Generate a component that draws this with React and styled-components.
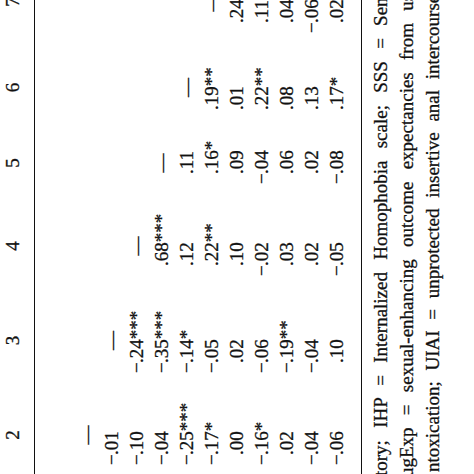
import React from 'react';
import styled, { createGlobalStyle } from 'styled-components';

const GlobalStyle = createGlobalStyle`
  html, body {
    margin: 0;
    padding: 0;
    background: #fff;
  }
`;

// columns 2..7 of the correlation matrix; true = column holds negative values
const columns = [
  { label: '2', neg: true },
  { label: '3', neg: true },
  { label: '4', neg: true },
  { label: '5', neg: true },
  { label: '6', neg: false },
  { label: '7', neg: true },
];

const rows = [
  [],
  ['—'],
  ['−.01', '—'],
  ['−.10', '−.24***', '—'],
  ['−.04', '−.35***', '.68***', '—'],
  ['−.25***', '−.14*', '.12', '.11', '—'],
  ['−.17*', '−.05', '.22**', '.16*', '.19**', '—'],
  ['.00', '.02', '.10', '.09', '.01', '.24**'],
  ['−.16*', '−.06', '−.02', '−.04', '.22**', '.11'],
  ['.02', '−.19**', '.03', '.06', '.08', '.04'],
  ['−.04', '−.04', '.02', '.02', '.13', '−.06'],
  ['−.06', '.10', '−.05', '−.08', '.17*', '.02'],
];

const notes = [
  { text: 'tory; IHP = Internalized Homophobia scale; SSS = Sensation Seeking Scale;', shift: -2, spacing: 7.5 },
  { text: 'ugExp = sexual-enhancing outcome expectancies from use of drugs during sex;', shift: -3, spacing: 7.5 },
  { text: 'ntoxication; UIAI = unprotected insertive anal intercourse with casual partners', shift: 2, spacing: 6 },
];

const Stage = styled.div`
  width: 474px;
  height: 474px;
  overflow: hidden;
  background: #fff;
`;

// the scanned page lies on its side
const Page = styled.div`
  width: 474px;
  height: 474px;
  overflow: hidden;
  transform: rotate(-90deg);
  transform-origin: center;
  font-family: 'Liberation Serif', 'Times New Roman', serif;
  font-size: 19px;
  color: #111;
  -webkit-text-stroke: 0.3px #111;
`;

const Row = styled.div`
  display: grid;
  grid-template-columns: 60px 65px 60px 42px 45px 62px;
  column-gap: 32px;
  height: 25px;
  line-height: 25px;
  padding-left: 9px;
  white-space: nowrap;
`;

const Cell = styled.div`
  text-align: ${(p) => (p.$center ? 'center' : 'left')};
`;

const Sign = styled.span`
  display: inline-block;
  width: ${(p) => (p.$slot ? '10px' : '0')};
`;

const Rule = styled.div`
  margin-top: ${(p) => p.$top}px;
  border-top: 1.5px solid #111;
`;

const Body = styled.div`
  margin-top: 14px;
`;

const Notes = styled.div`
  margin-top: 6px;
`;

const NoteLine = styled.div`
  height: 26px;
  line-height: 26px;
  white-space: nowrap;
  margin-left: ${(p) => p.$shift}px;
  word-spacing: ${(p) => p.$spacing}px;
`;

const Value = ({ value, slot }) => {
  if (!value) return <Cell />;
  if (value === '—') return <Cell $center>—</Cell>;
  const neg = value.startsWith('−');
  return (
    <Cell>
      <Sign $slot={slot}>{neg ? '−' : ''}</Sign>
      {neg ? value.slice(1) : value}
    </Cell>
  );
};

const App = () => (
  <Stage>
    <GlobalStyle />
    <Page>
      <Row>
        {columns.map((c) => (
          <Cell key={c.label} $center>
            {c.label}
          </Cell>
        ))}
      </Row>
      <Rule $top={9} />
      <Body>
        {rows.map((r, i) => (
          <Row key={i}>
            {columns.map((c, j) => (
              <Value key={c.label} value={r[j]} slot={c.neg} />
            ))}
          </Row>
        ))}
      </Body>
      <Rule $top={12} />
      <Notes>
        {notes.map((n) => (
          <NoteLine key={n.text} $shift={n.shift} $spacing={n.spacing}>
            {n.text}
          </NoteLine>
        ))}
      </Notes>
    </Page>
  </Stage>
);

export default App;
